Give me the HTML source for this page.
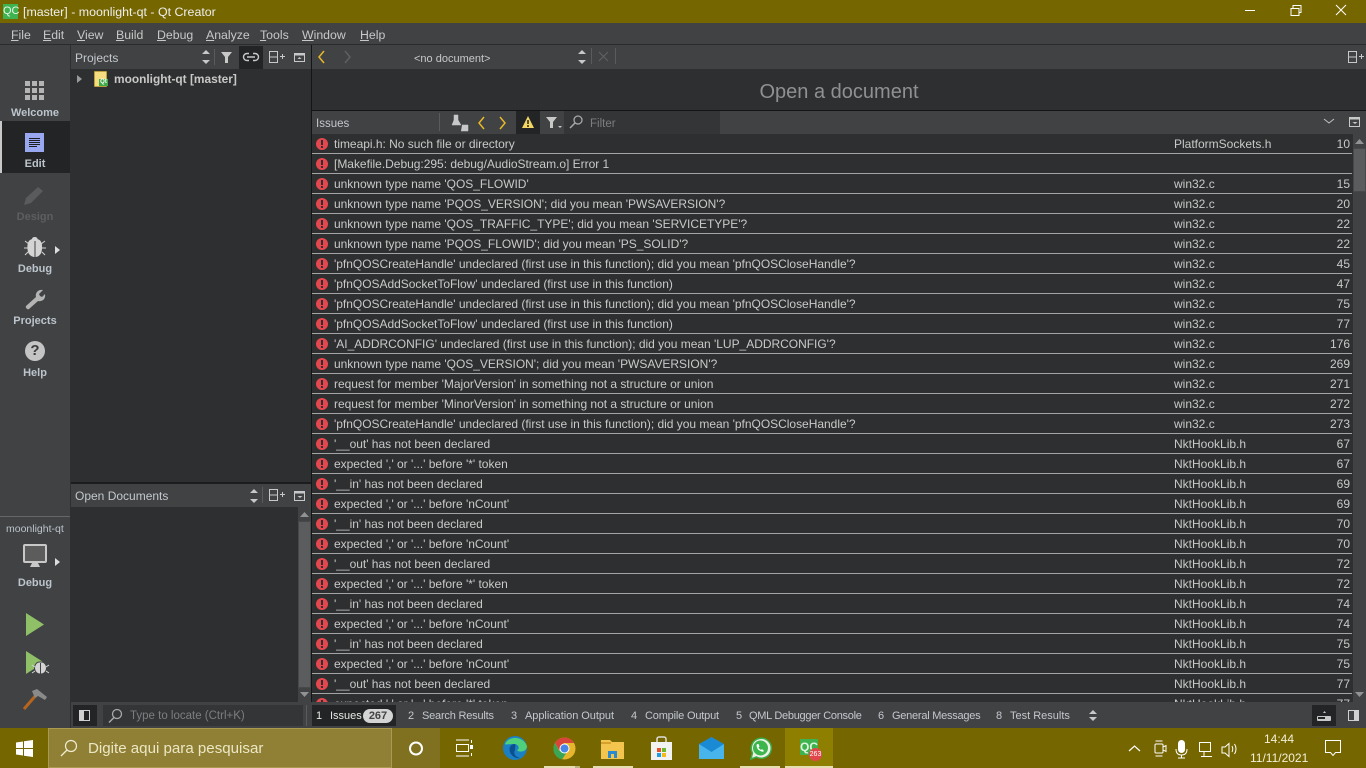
<!DOCTYPE html>
<html><head><meta charset="utf-8"><title>Qt Creator</title>
<style>
html,body{margin:0;padding:0;width:1366px;height:768px;overflow:hidden;background:#2e2f30}
body{position:relative;font-family:"Liberation Sans",sans-serif;font-size:12px;color:#d0d0d0}
.a{position:absolute}
.t{position:absolute;white-space:nowrap;line-height:16px}
svg{position:absolute;overflow:visible}
u{text-decoration:underline}
.menu span{position:absolute;top:27px;color:#c8c8c8;font-size:12.3px;line-height:16px;white-space:nowrap}
.nav{position:absolute;left:0;width:70px;text-align:center;font-weight:bold;font-size:11px;color:#bcc4cc;line-height:14px}
.row{position:absolute;left:312px;width:1040px;height:19px;border-bottom:1px solid #a4a4a4;line-height:21px;white-space:nowrap;color:#c9c9c9}
.row i{position:absolute;left:4px;top:4px;width:12px;height:12px;border-radius:50%;background:#e4484e}
.row i:before{content:"";position:absolute;left:5px;top:2px;width:2px;height:5px;background:#2e2f30}
.row i:after{content:"";position:absolute;left:5px;top:8px;width:2px;height:2px;background:#2e2f30}
.row b{position:absolute;left:22px;font-weight:normal;font-size:12px;letter-spacing:-.02px}
.row s{position:absolute;left:862px;text-decoration:none}
.row em{position:absolute;right:2px;font-style:normal}
.tab{position:absolute;top:708px;white-space:nowrap;line-height:16px;font-size:11px;color:#c4c8cc}
</style></head><body>

<!-- title bar -->
<div class="a" style="left:0;top:0;width:1366px;height:23px;background:#756600"></div>
<div class="a" style="left:3px;top:4px;width:15px;height:15px;background:#3fb34f;color:#eaf7ea;font:11px/15px 'Liberation Sans',sans-serif;text-align:center">QC</div>
<div class="t" style="left:23px;top:4px;color:#eee;font-size:12.4px">[master] - moonlight-qt - Qt Creator</div>
<svg style="left:0;top:0" width="1366" height="23"><path d="M1245 10.500h10" stroke="#fff" fill="none"/><path d="M1291 8.500h8v7h-8zM1293 8v-2.500h8v7h-2" stroke="#fff" fill="none"/><path d="M1336 5l10 10M1346 5l-10 10" stroke="#fff" fill="none"/></svg>

<!-- menu -->
<div class="a" style="left:0;top:23px;width:1366px;height:21px;background:#404244;border-bottom:1px solid #2a2b2c"></div>
<div class="menu">
<span style="left:11px"><u>F</u>ile</span><span style="left:43px"><u>E</u>dit</span><span style="left:77px"><u>V</u>iew</span><span style="left:116px"><u>B</u>uild</span><span style="left:157px"><u>D</u>ebug</span><span style="left:206px"><u>A</u>nalyze</span><span style="left:260px"><u>T</u>ools</span><span style="left:302px"><u>W</u>indow</span><span style="left:360px"><u>H</u>elp</span>
</div>

<!-- left nav -->
<div class="a" style="left:0;top:45px;width:70px;height:683px;background:#404244"></div>
<div class="a" style="left:70px;top:45px;width:1px;height:657px;background:#2e2f30"></div>
<svg style="left:25px;top:81px" width="20" height="20"><g fill="#b4b4b4"><rect x="0" y="0" width="5" height="5"/><rect x="7" y="0" width="5" height="5"/><rect x="14" y="0" width="5" height="5"/><rect x="0" y="7" width="5" height="5"/><rect x="7" y="7" width="5" height="5"/><rect x="14" y="7" width="5" height="5"/><rect x="0" y="14" width="5" height="5"/><rect x="7" y="14" width="5" height="5"/><rect x="14" y="14" width="5" height="5"/></g></svg>
<div class="nav" style="top:106px">Welcome</div>
<div class="a" style="left:0;top:121px;width:70px;height:52px;background:#232425"></div>
<div class="a" style="left:0;top:121px;width:2px;height:52px;background:#c8c8c8"></div>
<div class="a" style="left:25px;top:133px;width:19px;height:19px;background:#99a7f0"></div>
<svg style="left:29px;top:138px" width="12" height="10"><path d="M0 .5h11M0 2.500h11M0 4.500h11M0 6.500h11M0 8.500h8" stroke="#1d1d20"/></svg>
<div class="nav" style="top:157px">Edit</div>
<svg style="left:24px;top:185px" width="22" height="22"><path d="M0 20l2-7L14 2l5 4L7 18z" fill="#595b5d"/></svg>
<div class="nav" style="top:210px;color:#5c5e60">Design</div>
<svg style="left:24px;top:236px" width="22" height="22"><path d="M11 1c-2 0-3 1-3 2l-2 1C3 6 3 12 4 16c1 3 4 5 6.500 5V5h1v16c2.500 0 5-2 6-5 1-4 1-10-2-12l-2-1c0-1-1-2-3-2z" fill="#d4d4d4"/><path d="M1 5l4 3M21 5l-4 3M0 12h4M22 12h-4M1 19l3-3M21 19l-3-3" stroke="#d4d4d4" fill="none"/></svg>
<svg style="left:55px;top:246px" width="6" height="8"><path d="M0 0l5 4-5 4z" fill="#ddd"/></svg>
<div class="nav" style="top:262px">Debug</div>
<svg style="left:25px;top:289px" width="20" height="21"><path d="M1 17L11 8C10 4 13 0 18 1l-4 4 1 2 2 1 3-3c1 5-3 8-7 7L4 20c-1 1-4-1-3-3z" fill="#b4b4b4"/></svg>
<div class="nav" style="top:314px">Projects</div>
<div class="a" style="left:25px;top:341px;width:20px;height:20px;border-radius:50%;background:#c4c4c4;color:#3a3a3a;font:bold 15px/20px 'Liberation Sans',sans-serif;text-align:center">?</div>
<div class="nav" style="top:366px">Help</div>
<div class="a" style="left:0;top:516px;width:70px;height:1px;background:#646668"></div>
<div class="t" style="left:6px;top:522px;font-size:10.5px;color:#bcc4cc;line-height:14px">moonlight-qt</div>
<svg style="left:22px;top:543px" width="26" height="26"><rect x="2" y="2" width="22" height="17" rx="1" fill="#5c5c5c" stroke="#c8c8c8" stroke-width="2"/><path d="M10 20h6l2 4H8z" fill="#c8c8c8"/></svg>
<svg style="left:55px;top:558px" width="6" height="8"><path d="M0 0l5 4-5 4z" fill="#ddd"/></svg>
<div class="nav" style="top:576px">Debug</div>
<svg style="left:26px;top:613px" width="20" height="24"><path d="M0 0l18 11.500L0 23z" fill="#8fc068"/></svg>
<svg style="left:26px;top:651px" width="20" height="24"><path d="M0 0l18 11.500L0 23z" fill="#8fc068"/><path d="M13.500 11c-3 0-5 3-5 6s2 6 5.500 6h1c3.500 0 5.500-3 5.500-6s-2-6-5-6z" fill="#d4d4d4" stroke="#404244"/><path d="M14.500 12v11" stroke="#404244"/><path d="M6 14l3 2M23 14l-3 2M6 22l3-2M23 22l-3-2" stroke="#d4d4d4"/></svg>
<svg style="left:23px;top:688px" width="24" height="24"><path d="M1 21L14 6" stroke="#b5651d" stroke-width="3" fill="none"/><path d="M9 3l5-2 10 8-2 3-7-4-3 2z" fill="#8a8a8a"/></svg>

<!-- project panel -->
<div class="a" style="left:71px;top:45px;width:240px;height:24px;background:#404244"></div>
<div class="t" style="left:75px;top:50px;color:#c4c8cc">Projects</div>
<svg style="left:71px;top:45px" width="240" height="24"><path d="M131 9l4-4 4 4zM131 15l4 4 4-4z" fill="#c8c8c8"/><path d="M143.500 4v16" stroke="#595b5d"/><path d="M150 7h11l-4 5v6h-3v-6z" fill="#c8c8c8"/></svg>
<div class="a" style="left:239px;top:46px;width:24px;height:23px;background:#232425"></div>
<svg style="left:243px;top:51px" width="16" height="12"><path d="M6 2.500H4a3.500 3.500 0 0 0 0 7h2M10 2.500h2a3.500 3.500 0 0 1 0 7h-2M4 6h8" stroke="#c8c8c8" stroke-width="1.400" fill="none"/></svg>
<svg style="left:269px;top:51px" width="16" height="12"><path d="M.5.500h8v11h-8zM.5 6h8M11 5.500h5M13.500 3v5" stroke="#c8c8c8" fill="none"/></svg>
<svg style="left:294px;top:53px" width="12" height="10"><rect x=".5" y=".5" width="10" height="8" fill="none" stroke="#c8c8c8"/><path d="M.5 1.500h10" stroke="#c8c8c8" stroke-width="2"/><path d="M3.500 6l2-2 2 2z" fill="#c8c8c8"/></svg>
<svg style="left:77px;top:75px" width="6" height="8"><path d="M0 0l5 4-5 4z" fill="#9a9a9a"/></svg>
<div class="a" style="left:94px;top:71px;width:11px;height:14px;background:#f5dc80;border:1px solid #b89e3c;border-radius:1px;box-sizing:content-box"></div>
<div class="a" style="left:99px;top:79px;width:9px;height:7px;background:#41a84a;color:#fff;font:bold 6px/7px 'Liberation Sans',sans-serif;text-align:center">Qt</div>
<div class="t" style="left:114px;top:71px;font-weight:bold;color:#c8c8c8;font-size:11.9px">moonlight-qt [master]</div>

<!-- open documents -->
<div class="a" style="left:71px;top:482px;width:240px;height:2px;background:#1c1d1e"></div>
<div class="a" style="left:71px;top:484px;width:240px;height:23px;background:#404244"></div>
<div class="t" style="left:75px;top:488px;color:#c4c8cc">Open Documents</div>
<svg style="left:71px;top:484px" width="240" height="24"><path d="M179 9l4-4 4 4zM179 15l4 4 4-4z" fill="#c8c8c8"/><path d="M191.500 3v16" stroke="#595b5d"/><path d="M198.500 5.500h8v11h-8zM198.500 11h8M209 10.500h5M211.500 8v5" stroke="#c8c8c8" fill="none"/><rect x="223.500" y="7.500" width="10" height="9" fill="none" stroke="#c8c8c8"/><path d="M223.500 8.500h10" stroke="#c8c8c8" stroke-width="2"/><path d="M226.500 12h5l-2.500 2z" fill="#c8c8c8"/></svg>
<div class="a" style="left:298px;top:507px;width:13px;height:195px;background:#404244"></div>
<div class="a" style="left:298px;top:521px;width:13px;height:167px;background:#5a5c5e;box-sizing:border-box;border:1px solid #46484a"></div>
<svg style="left:298px;top:507px" width="13" height="195"><path d="M2 10l4.500-5 4.500 5z" fill="#909294"/><path d="M2 185l4.500 5 4.500-5z" fill="#909294"/></svg>
<div class="a" style="left:311px;top:45px;width:1px;height:657px;background:#141516"></div>

<!-- editor header -->
<div class="a" style="left:312px;top:45px;width:1054px;height:24px;background:#404244"></div>
<svg style="left:312px;top:45px" width="1054" height="24"><path d="M12 6l-5 6 5 6" stroke="#e8b828" stroke-width="1.500" fill="none"/><path d="M33 6l5 6-5 6" stroke="#5e6062" stroke-width="1.500" fill="none"/><path d="M266 9l4-4 4 4zM266 15l4 4 4-4z" fill="#c8c8c8"/><path d="M279.500 3v16M303.500 3v16" stroke="#595b5d"/><path d="M287 7l9 9M296 7l-9 9" stroke="#5e6062" stroke-width="1.200"/><path d="M1036.500 6.500h8v11h-8zM1036.500 12h8M1047 11.500h5M1049.500 9v5" stroke="#c8c8c8" fill="none"/></svg>
<div class="t" style="left:414px;top:51px;color:#c8c8c8;font-size:11px">&lt;no document&gt;</div>
<div class="a" style="left:312px;top:69px;width:1054px;height:41px;background:#2e2f30"></div>
<div class="t" style="left:312px;width:1054px;text-align:center;top:80px;line-height:24px;font-size:20px;color:#8e9092">Open a document</div>
<div class="a" style="left:312px;top:110px;width:1054px;height:1px;background:#141516"></div>

<!-- issues header -->
<div class="a" style="left:312px;top:111px;width:1054px;height:23px;background:#404244"></div>
<div class="t" style="left:316px;top:116px;color:#c4c8cc;font-size:11.5px">Issues</div>
<div class="a" style="left:516px;top:111px;width:24px;height:23px;background:#232425"></div>
<div class="a" style="left:564px;top:111px;width:156px;height:23px;background:#333537"></div>
<svg style="left:312px;top:111px" width="1054" height="23"><path d="M127.500 2v18" stroke="#595b5d"/><path d="M142 4h4v5l3 5h-9l2-5zM150 14h6v6h-7" fill="#c8c8c8" stroke="#c8c8c8" stroke-width=".5"/><path d="M172 6l-5 6 5 6" stroke="#e8b828" stroke-width="1.500" fill="none"/><path d="M188 6l5 6-5 6" stroke="#e8b828" stroke-width="1.500" fill="none"/><path d="M216 5l6 12h-12z" fill="#f3d664"/><path d="M216 9v4M216 14v2" stroke="#232425" stroke-width="1.500"/><path d="M234 6h11l-4 5v6h-3v-6z" fill="#c8c8c8"/><path d="M246 15h4l-2 2z" fill="#c8c8c8"/><circle cx="266" cy="9" r="4" fill="none" stroke="#a8a8a8" stroke-width="1.300"/><path d="M263 12l-5 5" stroke="#a8a8a8" stroke-width="1.500"/><path d="M1012 8l5 4 5-4" stroke="#c0c0c0" fill="none"/><rect x="1037.500" y="6.500" width="10" height="9" fill="none" stroke="#c8c8c8"/><path d="M1037.500 7.500h10" stroke="#c8c8c8" stroke-width="2"/><path d="M1040.500 11h5l-2.500 2z" fill="#c8c8c8"/></svg>
<div class="t" style="left:590px;top:116px;color:#7c7e80;font-size:11.5px">Filter</div>

<!-- issues rows -->
<div class="a" style="left:312px;top:134px;width:1054px;height:568px;overflow:hidden;background:#2e2f30">
<div style="position:absolute;left:-312px;top:-134px;width:1366px;height:768px">
<div class="row" style="top:134px"><i></i><b>timeapi.h: No such file or directory</b><s>PlatformSockets.h</s><em>10</em></div>
<div class="row" style="top:154px"><i></i><b>[Makefile.Debug:295: debug/AudioStream.o] Error 1</b></div>
<div class="row" style="top:174px"><i></i><b>unknown type name 'QOS_FLOWID'</b><s>win32.c</s><em>15</em></div>
<div class="row" style="top:194px"><i></i><b>unknown type name 'PQOS_VERSION'; did you mean 'PWSAVERSION'?</b><s>win32.c</s><em>20</em></div>
<div class="row" style="top:214px"><i></i><b>unknown type name 'QOS_TRAFFIC_TYPE'; did you mean 'SERVICETYPE'?</b><s>win32.c</s><em>22</em></div>
<div class="row" style="top:234px"><i></i><b>unknown type name 'PQOS_FLOWID'; did you mean 'PS_SOLID'?</b><s>win32.c</s><em>22</em></div>
<div class="row" style="top:254px"><i></i><b>'pfnQOSCreateHandle' undeclared (first use in this function); did you mean 'pfnQOSCloseHandle'?</b><s>win32.c</s><em>45</em></div>
<div class="row" style="top:274px"><i></i><b>'pfnQOSAddSocketToFlow' undeclared (first use in this function)</b><s>win32.c</s><em>47</em></div>
<div class="row" style="top:294px"><i></i><b>'pfnQOSCreateHandle' undeclared (first use in this function); did you mean 'pfnQOSCloseHandle'?</b><s>win32.c</s><em>75</em></div>
<div class="row" style="top:314px"><i></i><b>'pfnQOSAddSocketToFlow' undeclared (first use in this function)</b><s>win32.c</s><em>77</em></div>
<div class="row" style="top:334px"><i></i><b>'AI_ADDRCONFIG' undeclared (first use in this function); did you mean 'LUP_ADDRCONFIG'?</b><s>win32.c</s><em>176</em></div>
<div class="row" style="top:354px"><i></i><b>unknown type name 'QOS_VERSION'; did you mean 'PWSAVERSION'?</b><s>win32.c</s><em>269</em></div>
<div class="row" style="top:374px"><i></i><b>request for member 'MajorVersion' in something not a structure or union</b><s>win32.c</s><em>271</em></div>
<div class="row" style="top:394px"><i></i><b>request for member 'MinorVersion' in something not a structure or union</b><s>win32.c</s><em>272</em></div>
<div class="row" style="top:414px"><i></i><b>'pfnQOSCreateHandle' undeclared (first use in this function); did you mean 'pfnQOSCloseHandle'?</b><s>win32.c</s><em>273</em></div>
<div class="row" style="top:434px"><i></i><b>'__out' has not been declared</b><s>NktHookLib.h</s><em>67</em></div>
<div class="row" style="top:454px"><i></i><b>expected ',' or '...' before '*' token</b><s>NktHookLib.h</s><em>67</em></div>
<div class="row" style="top:474px"><i></i><b>'__in' has not been declared</b><s>NktHookLib.h</s><em>69</em></div>
<div class="row" style="top:494px"><i></i><b>expected ',' or '...' before 'nCount'</b><s>NktHookLib.h</s><em>69</em></div>
<div class="row" style="top:514px"><i></i><b>'__in' has not been declared</b><s>NktHookLib.h</s><em>70</em></div>
<div class="row" style="top:534px"><i></i><b>expected ',' or '...' before 'nCount'</b><s>NktHookLib.h</s><em>70</em></div>
<div class="row" style="top:554px"><i></i><b>'__out' has not been declared</b><s>NktHookLib.h</s><em>72</em></div>
<div class="row" style="top:574px"><i></i><b>expected ',' or '...' before '*' token</b><s>NktHookLib.h</s><em>72</em></div>
<div class="row" style="top:594px"><i></i><b>'__in' has not been declared</b><s>NktHookLib.h</s><em>74</em></div>
<div class="row" style="top:614px"><i></i><b>expected ',' or '...' before 'nCount'</b><s>NktHookLib.h</s><em>74</em></div>
<div class="row" style="top:634px"><i></i><b>'__in' has not been declared</b><s>NktHookLib.h</s><em>75</em></div>
<div class="row" style="top:654px"><i></i><b>expected ',' or '...' before 'nCount'</b><s>NktHookLib.h</s><em>75</em></div>
<div class="row" style="top:674px"><i></i><b>'__out' has not been declared</b><s>NktHookLib.h</s><em>77</em></div>
<div class="row" style="top:694px"><i></i><b>expected ',' or '...' before '*' token</b><s>NktHookLib.h</s><em>77</em></div>
</div></div>
<!-- issues scrollbar -->
<div class="a" style="left:1353px;top:134px;width:13px;height:568px;background:#404244"></div>
<div class="a" style="left:1353px;top:148px;width:13px;height:44px;background:#5a5c5e;box-sizing:border-box;border:1px solid #46484a"></div>
<svg style="left:1353px;top:134px" width="13" height="568"><path d="M2 10l4.500-5 4.500 5z" fill="#909294"/><path d="M2 558l4.500 5 4.500-5z" fill="#909294"/></svg>

<!-- bottom bar -->
<div class="a" style="left:71px;top:702px;width:1295px;height:26px;background:#404244"></div>
<div class="a" style="left:73px;top:705px;width:24px;height:21px;background:#232425"></div>
<svg style="left:79px;top:710px" width="12" height="12"><rect x=".5" y=".5" width="10" height="10" fill="none" stroke="#d0d0d0"/><rect x="1" y="1" width="4" height="9" fill="#d0d0d0"/></svg>
<div class="a" style="left:103px;top:705px;width:200px;height:21px;background:#333537"></div>
<svg style="left:108px;top:708px" width="18" height="16"><circle cx="9" cy="6" r="4.500" fill="none" stroke="#a8a8a8" stroke-width="1.300"/><path d="M6 9.500l-5 5" stroke="#a8a8a8" stroke-width="1.500"/></svg>
<div class="t" style="left:130px;top:708px;color:#7c7e80;font-size:11.5px">Type to locate (Ctrl+K)</div>
<div class="a" style="left:306px;top:705px;width:1px;height:21px;background:#595b5d"></div>
<div class="a" style="left:312px;top:705px;width:84px;height:21px;background:#232425"></div>
<div class="tab" style="left:316px;color:#e8e8e8">1</div><div class="tab" style="left:330px;color:#e8e8e8">Issues</div>
<div class="a" style="left:363px;top:709px;width:30px;height:14px;border-radius:7px;background:#d4d4d4;color:#404244;font:bold 11px/14px 'Liberation Sans',sans-serif;text-align:center">267</div>
<div class="tab" style="left:408px">2</div><div class="tab" style="left:422px;letter-spacing:-.2px">Search Results</div>
<div class="tab" style="left:511px">3</div><div class="tab" style="left:525px;letter-spacing:-.05px">Application Output</div>
<div class="tab" style="left:631px">4</div><div class="tab" style="left:645px;letter-spacing:-.18px">Compile Output</div>
<div class="tab" style="left:736px">5</div><div class="tab" style="left:749px;letter-spacing:-.28px">QML Debugger Console</div>
<div class="tab" style="left:878px">6</div><div class="tab" style="left:892px;letter-spacing:-.25px">General Messages</div>
<div class="tab" style="left:996px">8</div><div class="tab" style="left:1010px">Test Results</div>
<svg style="left:1088px;top:709px" width="10" height="14"><path d="M1 5l4-4 4 4zM1 8l4 4 4-4z" fill="#c8c8c8"/></svg>
<div class="a" style="left:1312px;top:705px;width:24px;height:21px;background:#232425"></div>
<svg style="left:1316px;top:708px" width="16" height="16"><path d="M7 5l1.500-2L10 5z" fill="#c8c8c8"/><rect x="1" y="8" width="14" height="5" fill="#c8c8c8" rx="1"/><path d="M2 9h7v2H2z" fill="#232425"/></svg>
<svg style="left:1348px;top:710px" width="12" height="12"><rect x=".5" y=".5" width="10" height="10" fill="none" stroke="#d0d0d0"/><rect x="6" y="1" width="4" height="9" fill="#d0d0d0"/></svg>

<!-- taskbar -->
<div class="a" style="left:0;top:728px;width:1366px;height:40px;background:#756600"></div>
<svg style="left:16px;top:740px" width="17" height="17"><path d="M0 2.500l7-1v6.500H0zM8 1.300l9-1.300v8H8zM0 9h7v6.500l-7-1zM8 9h9v8l-9-1.300z" fill="#fff"/></svg>
<div class="a" style="left:48px;top:728px;width:344px;height:40px;background:#8f8035;box-sizing:border-box;border:1px solid #a89a50"></div>
<svg style="left:60px;top:739px" width="18" height="18"><circle cx="11" cy="7" r="5.500" fill="none" stroke="#f0ecd0" stroke-width="1.200"/><path d="M7 11l-6 6" stroke="#f0ecd0" stroke-width="1.300"/></svg>
<div class="t" style="left:88px;top:740px;font-size:15.1px;line-height:18px;color:#ece7c4">Digite aqui para pesquisar</div>
<div class="a" style="left:392px;top:728px;width:48px;height:40px;background:#7f7120"></div>
<svg style="left:408px;top:741px" width="16" height="16"><circle cx="8" cy="7.500" r="6" fill="none" stroke="#fff" stroke-width="2"/></svg>
<svg style="left:455px;top:739px" width="18" height="18"><path d="M1 1h13M1 17h13M1.500 5.500h12v7h-12z" stroke="#fff" fill="none"/><path d="M16.500 1v3M16.500 14v3" stroke="#fff"/><rect x="15" y="6" width="3" height="4" fill="#fff"/></svg>
<svg style="left:503px;top:736px" width="24" height="24"><circle cx="12" cy="12" r="12" fill="#1b7fc4"/><path d="M2 8C5 0 20-1 24 10c0 6-8 7-10 4 3-1 2-6-3-6-5 0-9 1-9 0z" fill="#4fd07c"/><path d="M12 8c-5 0-7 5-4 10 2 3 6 5 9 4-5-1-7-5-5-8 0-3 1-5 0-6z" fill="#0c4f8e"/></svg>
<svg style="left:553px;top:737px" width="23" height="23"><circle cx="11.500" cy="11.500" r="11" fill="#e8b62c"/><path d="M11.500.5a11 11 0 0 0-9.500 5.500l4 7 5-7h10a11 11 0 0 0-9.500-5.500z" fill="#d9453a"/><path d="M2 6a11 11 0 0 0 7 16.500l4-6-7-3z" fill="#3aa655"/><circle cx="11.500" cy="11.500" r="5" fill="#fff"/><circle cx="11.500" cy="11.500" r="4" fill="#4a86e8"/></svg>
<svg style="left:601px;top:739px" width="23" height="20"><path d="M0 1h9l2 2h12v17H0z" fill="#f3c44e"/><path d="M0 3h10v2H0z" fill="#d6a02c"/><path d="M7 12h9v7H7z" fill="#2a8ad0"/><path d="M10 15h3v4h-3z" fill="#f3c44e"/></svg>
<svg style="left:650px;top:736px" width="23" height="24"><path d="M7 6V3a2 2 0 0 1 2-2h5a2 2 0 0 1 2 2v3" fill="none" stroke="#ddd" stroke-width="1.500"/><rect x="1" y="6" width="21" height="18" fill="#f2f2f2"/><rect x="7" y="12" width="4" height="4" fill="#e8502a"/><rect x="12" y="12" width="4" height="4" fill="#6cb82c"/><rect x="7" y="17" width="4" height="4" fill="#1e9ee0"/><rect x="12" y="17" width="4" height="4" fill="#f6b91a"/></svg>
<svg style="left:699px;top:737px" width="25" height="22"><path d="M0 7L12.500 0 25 7v15H0z" fill="#1a8ad4"/><path d="M0 7l12.500 8L25 7v15H0z" fill="#48b4ec"/></svg>
<svg style="left:749px;top:737px" width="23" height="23"><path d="M2 22l1.500-6A10 10 0 1 1 7.500 20z" fill="#f0f0e8" stroke="#38b04a" stroke-width="1.500"/><circle cx="11.500" cy="11" r="7.500" fill="#3eb64e"/><path d="M8 7c-1 2 0 5 2.500 6.500S14 15 15 14l-2-2-1 1c-1-.5-2-1.500-2.500-2.500l1-1-1-2.500z" fill="#fff"/></svg>
<div class="a" style="left:785px;top:728px;width:48px;height:40px;background:#8f7f00"></div>
<div class="a" style="left:800px;top:739px;width:18px;height:16px;background:#3fb34f;color:#dff5df;font:bold 12px/16px 'Liberation Sans',sans-serif;text-align:center">QC</div>
<div class="a" style="left:809px;top:748px;width:13px;height:13px;border-radius:50%;background:#e0474c;color:#fff;font:7px/13px 'Liberation Sans',sans-serif;text-align:center">263</div>
<div class="a" style="left:740px;top:766px;width:40px;height:2px;background:#e4dfb0"></div>
<div class="a" style="left:785px;top:766px;width:48px;height:2px;background:#e4dfb0"></div>
<div class="a" style="left:544px;top:766px;width:31px;height:2px;background:#e4dfb0"></div>
<div class="a" style="left:575px;top:766px;width:5px;height:2px;background:#b8b27e"></div>
<div class="a" style="left:593px;top:766px;width:40px;height:2px;background:#e4dfb0"></div>
<svg style="left:1128px;top:738px" width="110" height="22"><path d="M1 13l5.500-5 5.500 5" stroke="#fff" fill="none" stroke-width="1.200"/><rect x="27" y="6" width="8" height="9" rx="1" fill="none" stroke="#fff"/><path d="M35 9l3-1.500v6L35 12zM27.500 3h7M27.500 18h7" stroke="#fff" fill="none"/><rect x="50" y="2" width="7" height="13" rx="3.500" fill="#fff"/><path d="M48 11c0 4 2 6 5.500 6s5.500-2 5.500-6M53.500 17v3M50 20h7" stroke="#fff" fill="none"/><path d="M71.500 4.500h11v9h-11zM76 13.500v5M73 18.500h11" stroke="#fff" fill="none"/><path d="M94 9h3l4-3.500v13L97 15h-3zM104 8c1 2 1 4 0 6M106.500 6c2 3 2 7 0 10" stroke="#fff" fill="none"/></svg>
<div class="t" style="left:1251px;top:731px;width:56px;text-align:center;color:#f4f0d8;font-size:12px">14:44</div>
<div class="t" style="left:1250px;top:750px;width:56px;text-align:center;color:#f4f0d8;font-size:12px">11/11/2021</div>
<svg style="left:1325px;top:740px" width="17" height="17"><path d="M.5.500h15v12h-5l-2.500 3-2.500-3H.5z" fill="none" stroke="#fff"/></svg>
</body></html>
